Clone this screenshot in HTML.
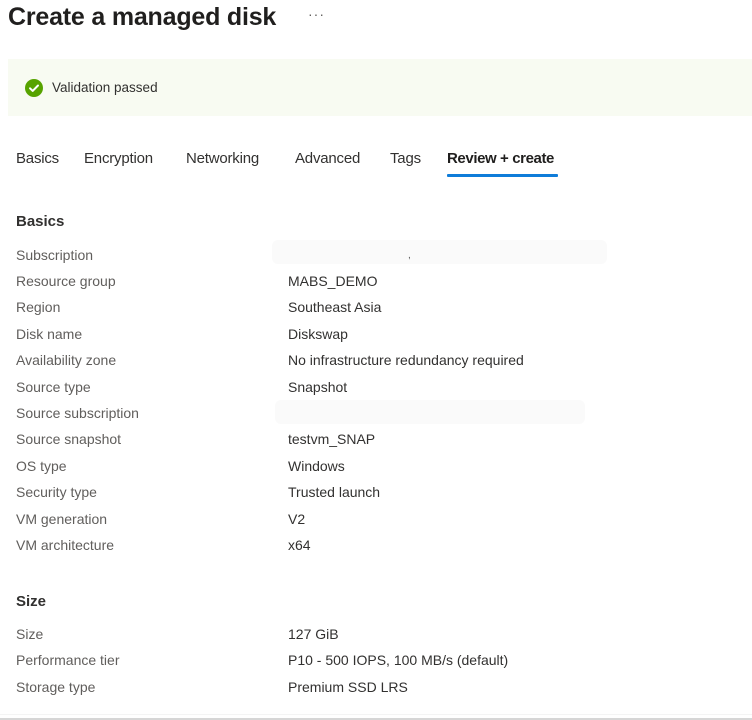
<!DOCTYPE html>
<html><head><meta charset="utf-8"><style>
*{margin:0;padding:0;box-sizing:border-box}
body{width:752px;height:720px;background:#fff;position:relative;overflow:hidden;font-family:"Liberation Sans",sans-serif;color:#323130}
.a{position:absolute;white-space:nowrap}
.t{left:8px;top:-1px;font-size:25px;font-weight:bold;letter-spacing:-0.2px;line-height:36px;color:#201f1e}
.dots{left:308px;top:6px;font-size:14px;color:#605e5c;letter-spacing:1px}
.ban{left:8px;top:59px;width:744px;height:57px;background:#f8fbf2}
.tab{top:149px;font-size:15px;line-height:20px;color:#323130;letter-spacing:-0.2px}
.lb{left:16px;font-size:14px;line-height:20px;color:#605e5c}
.v{left:288px;font-size:14px;line-height:20px;color:#323130}
.h{left:16px;font-size:15px;font-weight:bold;line-height:20px;color:#323130}
.blur{position:absolute;background:#fafafa;border-radius:6px}
</style></head><body>
<div class="a t">Create a managed disk</div>
<div class="a dots">···</div>
<div class="a ban"></div>
<svg class="a" style="left:25px;top:79px" width="18" height="18" viewBox="0 0 18 18"><circle cx="9" cy="9" r="9" fill="#57a300"/><path d="M5 9.3l2.7 2.6L13 6.5" stroke="#fff" stroke-width="2" fill="none" stroke-linecap="round" stroke-linejoin="round"/></svg>
<div class="a" style="left:52px;top:79px;font-size:13.5px;line-height:18px;color:#323130">Validation passed</div>
<div class="a tab" style="left:16px">Basics</div>
<div class="a tab" style="left:84px">Encryption</div>
<div class="a tab" style="left:186px">Networking</div>
<div class="a tab" style="left:295px">Advanced</div>
<div class="a tab" style="left:390px">Tags</div>
<div class="a tab" style="left:447px;font-weight:bold;color:#201f1e;letter-spacing:-0.4px">Review + create</div>
<div class="a" style="left:447px;top:174px;width:111px;height:3px;background:#0f7cd9;border-radius:1px"></div>
<div class="a h" style="top:212px">Basics</div>
<div class="blur" style="left:272px;top:240px;width:335px;height:24px"></div>
<div class="a" style="left:408px;top:250px;font-size:10px;color:#555">,</div>
<div class="blur" style="left:275px;top:400px;width:310px;height:24px"></div>
<div class="a lb" style="top:245px">Subscription</div>
<div class="a lb" style="top:271px">Resource group</div><div class="a v" style="top:271px">MABS_DEMO</div>
<div class="a lb" style="top:297px">Region</div><div class="a v" style="top:297px">Southeast Asia</div>
<div class="a lb" style="top:324px">Disk name</div><div class="a v" style="top:324px">Diskswap</div>
<div class="a lb" style="top:350px">Availability zone</div><div class="a v" style="top:350px">No infrastructure redundancy required</div>
<div class="a lb" style="top:377px">Source type</div><div class="a v" style="top:377px">Snapshot</div>
<div class="a lb" style="top:403px">Source subscription</div>
<div class="a lb" style="top:429px">Source snapshot</div><div class="a v" style="top:429px">testvm_SNAP</div>
<div class="a lb" style="top:456px">OS type</div><div class="a v" style="top:456px">Windows</div>
<div class="a lb" style="top:482px">Security type</div><div class="a v" style="top:482px">Trusted launch</div>
<div class="a lb" style="top:509px">VM generation</div><div class="a v" style="top:509px">V2</div>
<div class="a lb" style="top:535px">VM architecture</div><div class="a v" style="top:535px">x64</div>
<div class="a h" style="top:592px">Size</div>
<div class="a lb" style="top:624px">Size</div><div class="a v" style="top:624px">127 GiB</div>
<div class="a lb" style="top:650px">Performance tier</div><div class="a v" style="top:650px">P10 - 500 IOPS, 100 MB/s (default)</div>
<div class="a lb" style="top:677px">Storage type</div><div class="a v" style="top:677px">Premium SSD LRS</div>
<div class="a" style="left:0;top:714px;width:752px;height:1px;background:#f4f4f4"></div>
<div class="a" style="left:0;top:718px;width:752px;height:2px;background:#d6d6d6"></div>
</body></html>
